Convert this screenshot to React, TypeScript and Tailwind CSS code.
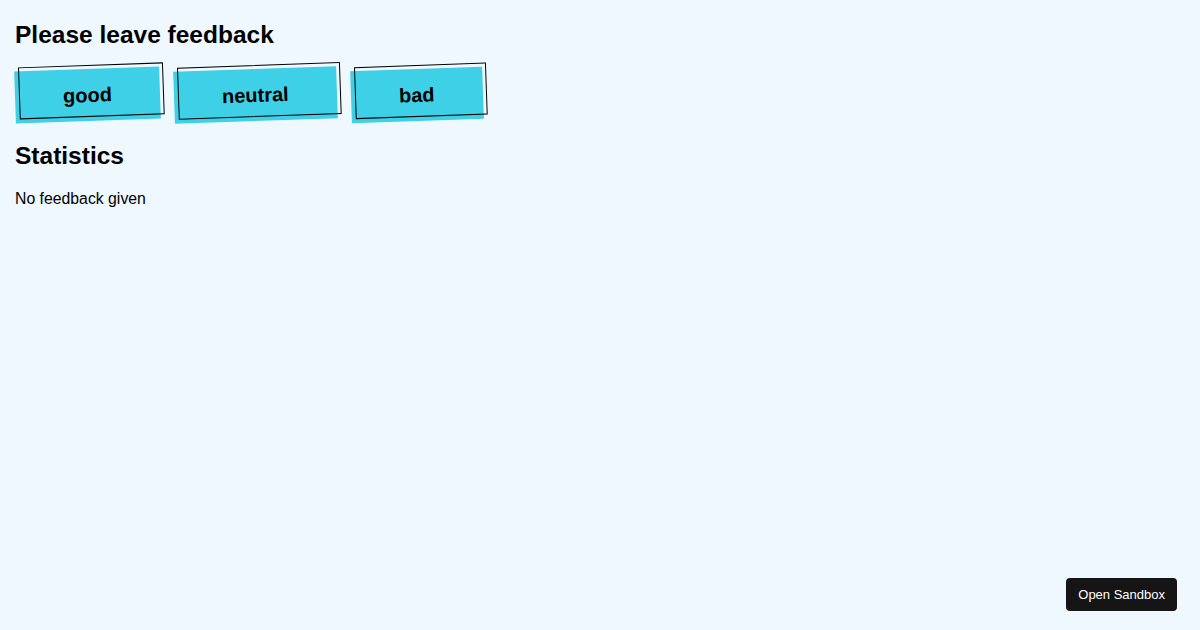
const options = ['good', 'neutral', 'bad'];

function FeedbackButton({ label }: { label: string }) {
  return (
    <button className="relative -rotate-2 bg-[#3dd0e6] px-12 py-3 text-xl font-bold leading-7 text-black">
      <span className="pointer-events-none absolute inset-0 translate-x-[4px] -translate-y-[4px] border border-black" />
      <span className="relative">{label}</span>
    </button>
  );
}

export default function App() {
  return (
    <div
      className="relative min-h-[630px] bg-[#eff7ff] px-[15px] pt-[19px] text-black"
      style={{ fontFamily: '"Liberation Sans", Arial, sans-serif' }}
    >
      <h1 className="text-[24.5px] font-bold leading-8">Please leave feedback</h1>
      <div className="mt-[18px] flex gap-[14px]">
        {options.map((o) => (
          <FeedbackButton key={o} label={o} />
        ))}
      </div>
      <h2 className="mt-[19px] text-[24.5px] font-bold leading-8">Statistics</h2>
      <p className="mt-[15px] text-[15.8px] leading-6">No feedback given</p>

      <button className="absolute bottom-[19px] right-[23px] rounded bg-[#151515] px-3 py-2 text-[13px] leading-[17px] text-white">
        Open Sandbox
      </button>
    </div>
  );
}
